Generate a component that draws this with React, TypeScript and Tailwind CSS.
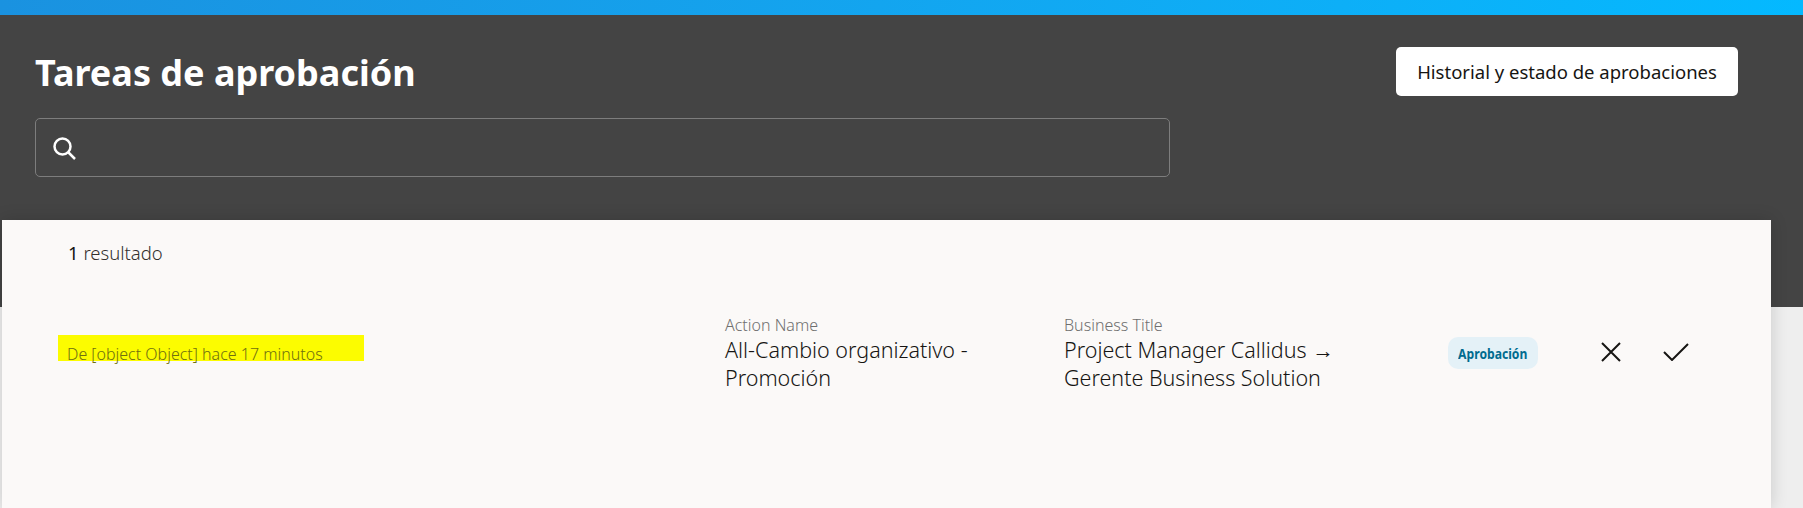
import React from "react";

export default function App() {
  return (
    <div className="relative h-[508px] w-[1803px] overflow-hidden bg-[#eeeeee] font-['Noto_Sans','Open_Sans',sans-serif]">
      <div className="h-[15px] bg-gradient-to-r from-[#1a92e0] to-[#04b9ff]" />
      <header className="flex h-[292px] items-start justify-between bg-[#444444] pl-[35px] pr-[65px]">
        <div className="w-[1135px]">
          <h1 className="mt-[33px] text-[36px] font-bold leading-[50px] text-white">Tareas de aprobación</h1>
          <div className="mt-[20px] flex h-[59px] w-[1135px] items-center rounded-[5px] border border-[#7d7d7d] pl-[16px]">
            <svg width="24" height="24" viewBox="0 0 24 24" fill="none" stroke="white" strokeWidth="2.5">
              <circle cx="10.5" cy="10.5" r="8" />
              <path d="M16.5 16.5 23 23" />
            </svg>
          </div>
        </div>
        <button className="mt-[32px] h-[49px] w-[342px] rounded-[5px] bg-white text-[18.5px] font-normal text-[#161513]">
          Historial y estado de aprobaciones
        </button>
      </header>
      <main className="mx-[2px] -mt-[87px] h-[288px] w-[1769px] bg-[#fbf9f8] shadow-[0_0_16px_rgba(0,0,0,0.16)]">
        <p className="pl-[66px] pt-[20px] text-[18.5px] font-light leading-[25px] text-[#33302e]">
          <span className="font-normal text-[#161513]">1</span> resultado
        </p>
        <div className="mt-[49px] flex items-start">
          <div className="ml-[56px] mt-[21px] h-[26px] w-[306px] bg-[#fcfc00] pl-[9px] pt-[9px] text-[16px] font-light leading-[21px] text-[#6f6f10]">
            De [object Object] hace 17 minutos
          </div>
          <div className="ml-[361px] w-[339px]">
            <div className="text-[16px] font-light leading-[22px] text-[#6f6f6f]">Action Name</div>
            <div className="text-[21.5px] font-light leading-[28px] text-[#161513]">All-Cambio organizativo - Promoción</div>
          </div>
          <div className="w-[384px]">
            <div className="text-[16px] font-light leading-[22px] text-[#6f6f6f]">Business Title</div>
            <div className="w-[300px] text-[21.5px] font-light leading-[28px] text-[#161513]">Project Manager Callidus → Gerente Business Solution</div>
          </div>
          <span className="mt-[23px] flex h-[32px] w-[90px] items-center justify-center rounded-[10px] bg-[#e4f1f7] text-[#006b8f]">
            <span className="scale-x-[0.81] text-[15px] font-bold">Aprobación</span>
          </span>
          <svg className="ml-[63px] mt-[28px]" width="20" height="20" viewBox="0 0 20 20" fill="none" stroke="#161513" strokeWidth="2"><path d="M1 1 19 19M19 1 1 19" /></svg>
          <svg className="ml-[42px] mt-[29px]" width="26" height="18" viewBox="0 0 26 18" fill="none" stroke="#161513" strokeWidth="2"><path d="M1 9 9 17 25 1" /></svg>
        </div>
      </main>
    </div>
  );
}
